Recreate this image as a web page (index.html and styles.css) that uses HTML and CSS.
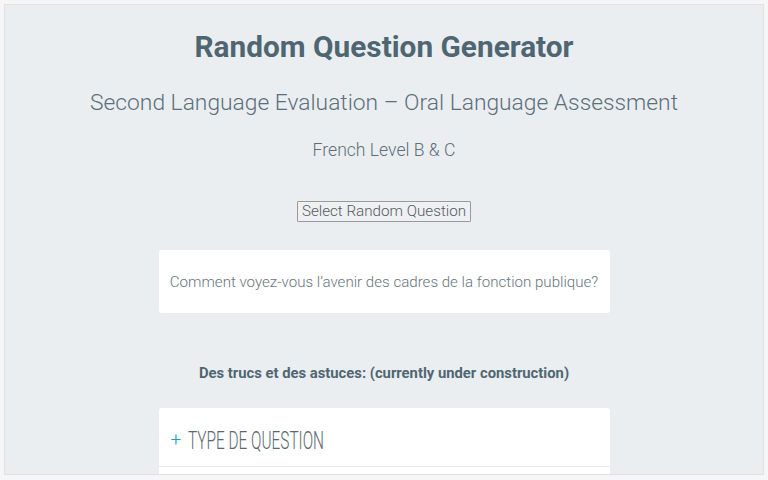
FILE: index.html
```html
<!DOCTYPE html>
<html lang="en">
<head>
<meta charset="utf-8">
<title>Random Question Generator</title>
<link rel="stylesheet" href="styles.css">
</head>
<body>
<div class="frame">
  <main class="page">
    <h1 class="title">Random Question Generator</h1>
    <h2 class="subtitle">Second Language Evaluation – Oral Language Assessment</h2>
    <h3 class="level">French Level B &amp; C</h3>
    <button class="pick" type="button">Select Random Question</button>
    <div class="card question">Comment voyez-vous l’avenir des cadres de la fonction publique?</div>
    <p class="tips">Des trucs et des astuces: (currently under construction)</p>
    <div class="card accordion">
      <div class="acc-head"><span class="plus">+</span><span class="acc-title">TYPE DE QUESTION</span></div>
      <div class="acc-next"></div>
    </div>
  </main>
</div>
</body>
</html>
```
FILE: styles.css
```css
html, body {
  margin: 0;
  padding: 0;
  background: #f6f6f6;
}
body {
  padding: 4px;
  height: 480px;
  box-sizing: border-box;
  overflow: hidden;
}
.frame {
  border: 1px solid #dfe2e4;
  background: #eaeef1;
  height: 471px;
  box-sizing: border-box;
  overflow: hidden;
}
.page {
  display: flex;
  flex-direction: column;
  align-items: center;
  font-family: Roboto, "Liberation Sans", sans-serif;
  color: #4f6672;
  padding-top: 25px;
}
.title {
  margin: 0;
  font-size: 29.8px;
  line-height: 34px;
  font-weight: 700;
  color: #4f6672;
}
.subtitle {
  margin: 24px 0 0;
  font-size: 22.8px;
  line-height: 30px;
  font-weight: 300;
  color: #5d6f7a;
}
.level {
  margin: 21px 0 0;
  font-size: 17.6px;
  line-height: 22px;
  font-weight: 300;
  color: #5d6f7a;
}
.pick {
  margin-top: 40px;
  font-family: Roboto, "Liberation Sans", sans-serif;
  font-size: 15.2px;
  font-weight: 300;
  color: #555a5e;
  background: #eef0f2;
  border: 1px solid #9a9a9a;
  border-radius: 1px;
  padding: 1px 4px;
  line-height: 17px;
}
.card {
  background: #fff;
  border-radius: 3px;
  width: 451px;
  box-sizing: border-box;
}
.question {
  margin-top: 28px;
  height: 63px;
  display: flex;
  align-items: center;
  justify-content: center;
  font-size: 15.1px;
  font-weight: 300;
  color: #68757e;
}
.tips {
  margin: 50px 0 0;
  font-size: 14.8px;
  line-height: 20px;
  font-weight: 700;
  color: #4f6672;
}
.accordion {
  margin-top: 25px;
}
.acc-head {
  display: flex;
  align-items: center;
  gap: 7px;
  height: 59px;
  box-sizing: border-box;
  padding: 4px 0 0 12px;
  border-bottom: 1px solid #e6e8ea;
}
.plus {
  color: #1aa0b4;
  font-size: 19px;
  font-weight: 300;
}
.acc-title {
  display: inline-block;
  font-size: 26.5px;
  font-weight: 300;
  color: #5b6770;
  transform: scaleX(0.58);
  transform-origin: left center;
}
.acc-next {
  height: 40px;
}
```
